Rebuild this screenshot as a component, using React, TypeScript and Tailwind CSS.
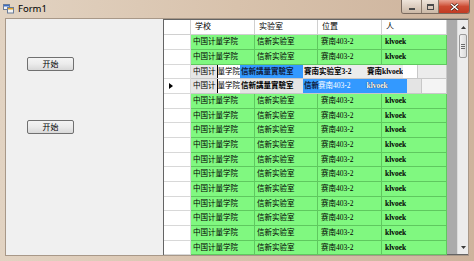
import React from "react";

const COLS = [64, 63, 64, 65];
const HEADERS = ["学校", "实验室", "位置", "人"];
const ROW_HEIGHTS = [15, 15, 14, 15, 15, 14, 15, 15, 14, 15, 15, 14, 15, 15, 14];
const cellFont = { fontFamily: '"Liberation Serif", "Noto Sans CJK SC", serif' };

function NormalCells() {
  return (
    <>
      <div className="w-[64px] shrink-0 h-full bg-[#80f880] border-r border-b border-[#5fc85f] pl-[2px] flex items-center">中国计量学院</div>
      <div className="w-[63px] shrink-0 h-full bg-[#80f880] border-r border-b border-[#5fc85f] pl-[2px] flex items-center">信新实验室</div>
      <div className="w-[64px] shrink-0 h-full bg-[#80f880] border-r border-b border-[#5fc85f] pl-[3px] flex items-center">赛南403-2</div>
      <div className="w-[65px] shrink-0 h-full bg-[#80f880] border-r border-b border-[#5fc85f] pl-[3px] flex items-center font-bold">klvoek</div>
    </>
  );
}

function EditRowA() {
  return (
    <>
      <div className="w-[49px] shrink-0 h-full flex items-center border-b border-[#c8c8c8]">
        <span className="bg-[#e6e6e6] h-full flex items-center pl-[2px] pr-[1px]">中国计</span>
        <span className="w-[1px] h-full bg-black" />
        <span className="bg-white h-full flex items-center flex-1">量学院</span>
      </div>
      <div className="w-[63px] shrink-0 h-full bg-[#3399ff] flex items-center pl-[1px] font-bold text-[#102040] border-b border-[#c8c8c8] overflow-hidden">信新講量實驗室</div>
      <div className="w-[64px] shrink-0 h-full bg-[#ececec] flex items-center pl-[1px] font-bold border-b border-[#c8c8c8] overflow-hidden">賽南实验室3-2</div>
      <div className="w-[36px] shrink-0 h-full bg-[#ececec] flex items-center font-bold border-b border-[#c8c8c8] overflow-hidden">賽南klvoek</div>
      <div className="w-[14px] shrink-0 h-full bg-white border-b border-[#c8c8c8]" />
      <div className="w-[30px] shrink-0 h-full bg-[#ececec] border-l border-r border-b border-[#c8c8c8]" />
    </>
  );
}

function EditRowB() {
  return (
    <>
      <div className="w-[49px] shrink-0 h-full flex items-center border-b border-[#c8c8c8]">
        <span className="bg-[#e6e6e6] h-full flex items-center pl-[2px] pr-[1px]">中国计</span>
        <span className="w-[1px] h-full bg-black" />
        <span className="bg-white h-full flex items-center flex-1">量学院</span>
      </div>
      <div className="w-[63px] shrink-0 h-full bg-[#e4e4e4] flex items-center pl-[1px] font-bold border-b border-[#c8c8c8] overflow-hidden">信新講量實驗室</div>
      <div className="w-[104px] shrink-0 h-full bg-[#3399ff] flex items-center pl-[1px] border-b border-[#c8c8c8] overflow-hidden">
        <span className="font-bold text-[#102040] w-[14px] shrink-0">信新</span>
        <span className="text-white">赛南403-2</span>
        <span className="ml-[16px] font-bold text-white [text-shadow:0_0_1px_#000]">klvoek</span>
      </div>
      <div className="w-[14px] shrink-0 h-full bg-[#e4e4e4] border-b border-[#c8c8c8]" />
      <div className="w-[26px] shrink-0 h-full bg-[#f4f4f4] border-l border-r border-b border-[#c8c8c8]" />
    </>
  );
}

export default function App() {
  return (
    <div
      className="w-[474px] h-[261px] overflow-hidden flex flex-col bg-gradient-to-r from-[#e2d3c2] via-[#d8c2ac] to-[#cdb39c]"
      style={{ fontFamily: '"Noto Sans CJK SC", sans-serif' }}
    >
      {/* title bar */}
      <div className="h-[18px] shrink-0 flex items-start justify-between pl-[3px] pr-[4px]">
        <div className="flex items-center gap-[4px] pt-[3px]">
          <svg width="11" height="11" viewBox="0 0 11 11">
            <rect x="0.5" y="1.5" width="6" height="5" fill="#f4f4f4" stroke="#6a7c98" />
            <rect x="1" y="2" width="5" height="1.5" fill="#3a6ec8" />
            <rect x="4.5" y="4.5" width="6" height="5.5" fill="#f4f4f4" stroke="#6a7c98" />
            <rect x="5" y="5" width="5" height="1.5" fill="#e0a020" />
          </svg>
          <span className="text-[9.5px] leading-none text-black" style={{ fontFamily: '"Noto Sans", sans-serif' }}>Form1</span>
        </div>
        <div className="flex h-[14px] rounded-b-[3px] border border-t-0 border-[#7a6a5e] overflow-hidden">
          <div className="w-[20px] h-full bg-gradient-to-b from-[#eee4da] to-[#cbb8a6] border-r border-[#8a7a6c] flex items-center justify-center">
            <span className="w-[6px] h-[2px] bg-white border border-[#4a4a4a] mt-[4px]" />
          </div>
          <div className="w-[17px] h-full bg-gradient-to-b from-[#eee4da] to-[#cbb8a6] border-r border-[#8a7a6c] flex items-center justify-center">
            <span className="w-[7px] h-[6px] border border-[#4a4a4a] border-t-2 bg-transparent" />
          </div>
          <div className="w-[30px] h-full bg-gradient-to-b from-[#e8a494] via-[#cc4a32] to-[#c23a22] flex items-center justify-center">
            <svg width="9" height="8" viewBox="0 0 9 8">
              <path d="M1 1 L8 7 M8 1 L1 7" stroke="#3a1a10" strokeWidth="2.6" />
              <path d="M1 1 L8 7 M8 1 L1 7" stroke="#ffffff" strokeWidth="1.5" />
            </svg>
          </div>
        </div>
      </div>

      {/* client area */}
      <div className="flex-1 mx-[5px] mb-[5px] bg-[#f0f0f0] border border-[#a89888] flex min-h-0">
        {/* left panel */}
        <div className="w-[156px] shrink-0 flex flex-col pl-[21px] pt-[38px] gap-[49px]">
          {[0, 1].map((i) => (
            <button
              key={i}
              className="w-[47px] h-[14px] rounded-[2px] border border-[#707070] bg-gradient-to-b from-[#f4f4f4] via-[#ebebeb] to-[#d8d8d8] text-[8px] leading-none text-black flex items-center justify-center"
            >
              开始
            </button>
          ))}
        </div>

        {/* data grid */}
        <div className="ml-[1px] flex-1 border border-[#646464] flex min-w-0 text-[7.5px] leading-none text-black whitespace-nowrap" style={cellFont}>
          <div className="flex flex-col w-[283px] shrink-0">
            {/* header */}
            <div className="flex h-[15px] shrink-0 bg-white">
              <div className="w-[27px] shrink-0 border-r border-b border-[#d0d0d0]" />
              {HEADERS.map((h, i) => (
                <div
                  key={h}
                  className="shrink-0 border-r border-b border-[#d0d0d0] pl-[4px] flex items-center text-[8px]"
                  style={{ width: COLS[i] }}
                >
                  {h}
                </div>
              ))}
            </div>
            {ROW_HEIGHTS.map((rh, r) => (
              <div key={r} className="flex shrink-0" style={{ height: rh }}>
                <div className="w-[27px] shrink-0 h-full bg-white border-r border-b border-[#d8d8d8] flex items-center pl-[5px]">
                  {r === 3 && (
                    <svg width="4" height="6" viewBox="0 0 4 6">
                      <path d="M0 0 L4 3 L0 6 Z" fill="#000" />
                    </svg>
                  )}
                </div>
                {r === 2 ? <EditRowA /> : r === 3 ? <EditRowB /> : <NormalCells />}
              </div>
            ))}
          </div>

          {/* empty grid background */}
          <div className="w-[10px] shrink-0 bg-[#ababab]" />

          {/* vertical scrollbar */}
          <div className="w-[11px] shrink-0 bg-[#ececec] border-l border-[#dcdcdc] flex flex-col">
            <div className="h-[14px] shrink-0 flex items-center justify-center">
              <svg width="5" height="3" viewBox="0 0 5 3">
                <path d="M0 3 L2.5 0 L5 3 Z" fill="#3a3a3a" />
              </svg>
            </div>
            <div className="mx-[1px] h-[24px] shrink-0 rounded-[2px] border border-[#9a9a9a] bg-gradient-to-r from-[#f2f2f2] to-[#dcdcdc] flex flex-col items-center justify-center gap-[1px]">
              <span className="w-[4px] h-[1px] bg-[#6a6a6a]" />
              <span className="w-[4px] h-[1px] bg-[#6a6a6a]" />
              <span className="w-[4px] h-[1px] bg-[#6a6a6a]" />
            </div>
            <div className="flex-1" />
            <div className="h-[14px] shrink-0 flex items-center justify-center">
              <svg width="5" height="3" viewBox="0 0 5 3">
                <path d="M0 0 L2.5 3 L5 0 Z" fill="#3a3a3a" />
              </svg>
            </div>
          </div>
        </div>
      </div>
    </div>
  );
}
